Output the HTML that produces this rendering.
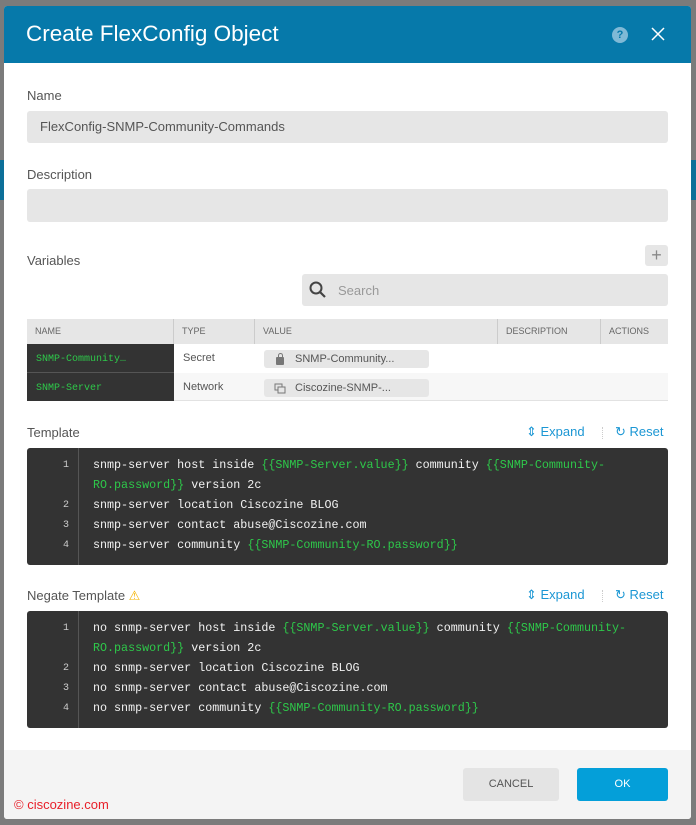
<!DOCTYPE html>
<html><head><style>
*{box-sizing:border-box;margin:0;padding:0}
body{width:696px;height:825px;background:#7b7b7b;font-family:"Liberation Sans",sans-serif;position:relative;overflow:hidden}
.abs{position:absolute}
.dlg{left:4px;top:6px;width:687px;height:813px;background:#fff;border-radius:3px;overflow:hidden}
.hdr{left:0;top:0;width:687px;height:57px;background:#0679aa;color:#fff;font-size:22.5px}
.lbl{font-size:13px;color:#555}
.inp{background:#e6e6e6;border-radius:3px}
.th{font-size:9px;color:#666;top:0;height:25px;line-height:25px;padding-left:8px;border-right:1px solid #ccc}
.code{background:#333;border-radius:3px;font-family:"Liberation Mono",monospace;font-size:11.7px;color:#f2f2f2}
.ln{position:absolute;left:0;width:50px;text-align:right;padding-right:8px;color:#ccc;font-size:10px}
.tx{position:absolute;left:66px;white-space:pre}
.g{color:#2ec84a}
.blue{color:#1c97d4;font-size:13px}
</style></head><body>
<div class="abs" style="left:0;top:160px;width:4px;height:40px;background:#0d6f99"></div>
<div class="abs" style="left:691px;top:160px;width:5px;height:40px;background:#0d6f99"></div>
<div class="abs dlg">
 <div class="abs hdr"><div class="abs" style="left:22px;top:15px">Create FlexConfig Object</div>
  <div class="abs" style="left:608px;top:21px;width:16px;height:16px;border-radius:50%;background:#7fb9d6;color:#0679aa;font-size:11px;font-weight:bold;text-align:center;line-height:16px">?</div>
  <svg class="abs" style="left:647px;top:21px" width="14" height="14"><path d="M1 1L13 13M13 1L1 13" stroke="#fff" stroke-width="1.5"/></svg>
 </div>
 <div class="abs lbl" style="left:23px;top:82px">Name</div>
 <div class="abs inp" style="left:23px;top:105px;width:641px;height:32px;font-size:13px;color:#555;line-height:32px;padding-left:13px">FlexConfig-SNMP-Community-Commands</div>
 <div class="abs lbl" style="left:23px;top:161px">Description</div>
 <div class="abs inp" style="left:23px;top:183px;width:641px;height:33px"></div>
 <div class="abs lbl" style="left:23px;top:247px">Variables</div>
 <div class="abs inp" style="left:641px;top:239px;width:23px;height:21px;color:#888;font-size:18px;text-align:center;line-height:21px">+</div>
 <div class="abs inp" style="left:298px;top:268px;width:366px;height:32px"><svg class="abs" style="left:7px;top:7px" width="18" height="18"><circle cx="7" cy="7" r="5.5" stroke="#444" stroke-width="2" fill="none"/><path d="M11 11L16 16" stroke="#444" stroke-width="2.2"/></svg><div class="abs" style="left:36px;top:9px;font-size:13px;color:#999">Search</div></div>
 <div class="abs" style="left:23px;top:313px;width:641px;height:83px">
  <div class="abs" style="left:0;top:0;width:641px;height:25px;background:#e6e6e6"></div>
  <div class="abs th" style="left:0;width:147px">NAME</div>
  <div class="abs th" style="left:147px;width:81px">TYPE</div>
  <div class="abs th" style="left:228px;width:243px">VALUE</div>
  <div class="abs th" style="left:471px;width:103px">DESCRIPTION</div>
  <div class="abs th" style="left:574px;width:67px;border:none">ACTIONS</div>
  <div class="abs" style="left:147px;top:54px;width:494px;height:28px;background:#f7f7f7;border-bottom:1px solid #e2e2e2"></div>
  <div class="abs" style="left:0;top:25px;width:147px;height:57px;background:#333"></div>
  <div class="abs" style="left:0;top:53px;width:147px;height:1px;background:#555"></div>
  <div class="abs g" style="left:9px;top:35px;font-family:'Liberation Mono',monospace;font-size:10px">SNMP-Community…</div>
  <div class="abs g" style="left:9px;top:64px;font-family:'Liberation Mono',monospace;font-size:10px">SNMP-Server</div>
  <div class="abs" style="left:156px;top:33px;font-size:11px;color:#555">Secret</div>
  <div class="abs" style="left:156px;top:62px;font-size:11px;color:#555">Network</div>
  <div class="abs inp" style="left:237px;top:31px;width:165px;height:18px;font-size:11px;color:#555;line-height:18px;padding-left:31px">SNMP-Community...</div>
  <div class="abs" style="left:249px;top:38px;width:8px;height:8px;background:#777;border-radius:1px"></div>
  <div class="abs" style="left:250.5px;top:34px;width:5px;height:6px;border:1.5px solid #777;border-bottom:none;border-radius:3px 3px 0 0"></div>
  <div class="abs inp" style="left:237px;top:60px;width:165px;height:18px;font-size:11px;color:#555;line-height:18px;padding-left:31px">Ciscozine-SNMP-...</div>
  <svg class="abs" style="left:247px;top:64px" width="12" height="12"><rect x="1" y="1" width="7" height="6" fill="none" stroke="#777"/><rect x="4" y="4" width="7" height="6" fill="#e6e6e6" stroke="#777"/></svg>
 </div>
 <div class="abs lbl" style="left:23px;top:419px">Template</div>
 <div class="abs blue" style="left:522px;top:418px">⇕ Expand</div>
 <div class="abs" style="left:598px;top:421px;height:12px;border-left:1px dotted #ccc"></div>
 <div class="abs blue" style="left:611px;top:418px">↻ Reset</div>
 <div class="abs code" style="left:23px;top:442px;width:641px;height:117px">
  <div class="abs" style="left:51px;top:0;width:1px;height:117px;background:#555"></div>
  <div class="ln" style="top:12px">1</div><div class="tx" style="top:10px">snmp-server host inside <span class="g">{{SNMP-Server.value}}</span> community <span class="g">{{SNMP-Community-</span></div>
  <div class="tx" style="top:30px"><span class="g">RO.password}}</span> version 2c</div>
  <div class="ln" style="top:52px">2</div><div class="tx" style="top:50px">snmp-server location Ciscozine BLOG</div>
  <div class="ln" style="top:72px">3</div><div class="tx" style="top:70px">snmp-server contact abuse@Ciscozine.com</div>
  <div class="ln" style="top:92px">4</div><div class="tx" style="top:90px">snmp-server community <span class="g">{{SNMP-Community-RO.password}}</span></div>
 </div>
 <div class="abs lbl" style="left:23px;top:582px">Negate Template <span style="color:#f5b400">⚠</span></div>
 <div class="abs blue" style="left:522px;top:581px">⇕ Expand</div>
 <div class="abs" style="left:598px;top:584px;height:12px;border-left:1px dotted #ccc"></div>
 <div class="abs blue" style="left:611px;top:581px">↻ Reset</div>
 <div class="abs code" style="left:23px;top:605px;width:641px;height:117px">
  <div class="abs" style="left:51px;top:0;width:1px;height:117px;background:#555"></div>
  <div class="ln" style="top:12px">1</div><div class="tx" style="top:10px">no snmp-server host inside <span class="g">{{SNMP-Server.value}}</span> community <span class="g">{{SNMP-Community-</span></div>
  <div class="tx" style="top:30px"><span class="g">RO.password}}</span> version 2c</div>
  <div class="ln" style="top:52px">2</div><div class="tx" style="top:50px">no snmp-server location Ciscozine BLOG</div>
  <div class="ln" style="top:72px">3</div><div class="tx" style="top:70px">no snmp-server contact abuse@Ciscozine.com</div>
  <div class="ln" style="top:92px">4</div><div class="tx" style="top:90px">no snmp-server community <span class="g">{{SNMP-Community-RO.password}}</span></div>
 </div>
 <div class="abs" style="left:0;top:744px;width:687px;height:69px;background:#f4f4f4"></div>
 <div class="abs" style="left:459px;top:762px;width:96px;height:33px;background:#e4e4e4;border-radius:3px;font-size:11px;color:#555;text-align:center;line-height:33px">CANCEL</div>
 <div class="abs" style="left:573px;top:762px;width:91px;height:33px;background:#049fd9;border-radius:3px;font-size:11px;color:#fff;text-align:center;line-height:33px">OK</div>
 <div class="abs" style="left:10px;top:791px;font-size:13px;color:#e8202a">© ciscozine.com</div>
</div>
</body></html>
